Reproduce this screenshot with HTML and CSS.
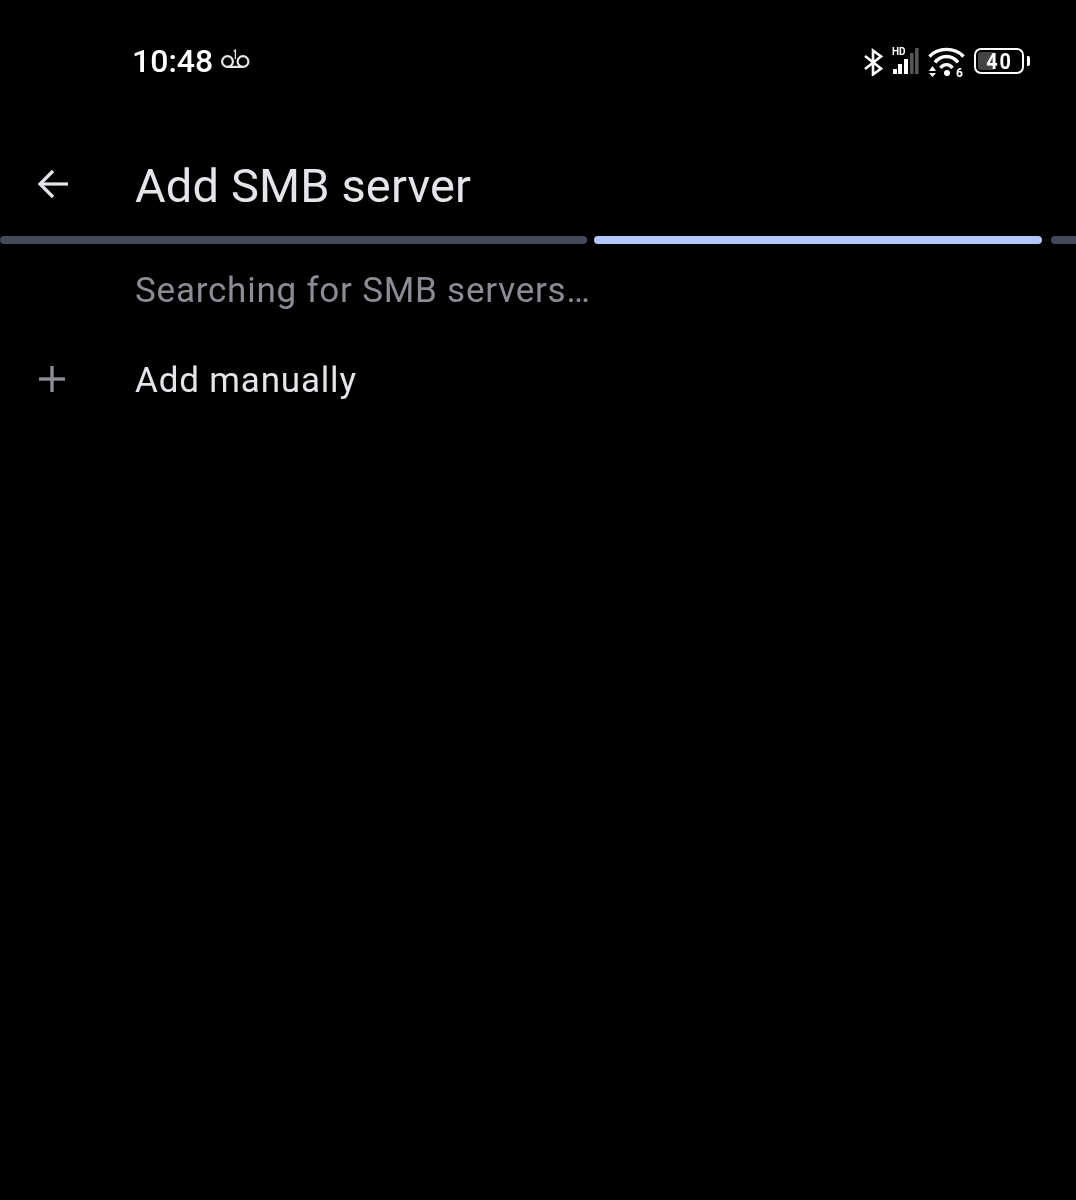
FILE: index.html
```html
<!DOCTYPE html>
<html lang="en">
<head>
    <meta charset="UTF-8">
    <meta name="viewport" content="width=device-width, initial-scale=1.0">
    <title>Add SMB server</title>
    <link rel="stylesheet" href="styles.css">
</head>
<body>
    <div class="status-bar">
        <div class="status-left">
            <span class="clock">10:48</span>
            <svg class="voicemail" width="30" height="24" viewBox="0 0 30 24" fill="none" stroke="#e6e6e6" stroke-width="2.2">
                <circle cx="7.5" cy="12.5" r="5.4"/>
                <circle cx="23" cy="12.5" r="5.4"/>
                <path d="M7.5 17.9H23"/>
                <path d="M13.8 2.4L15.4 1V10" stroke-width="1.3"/>
            </svg>
        </div>
        <div class="status-right">
            <svg class="bluetooth" width="20" height="30" viewBox="0 0 20 30" fill="none" stroke="#fff" stroke-width="2.6">
                <path d="M2 10L18 22.5L10 28.5V4.5L18 10.5L2 23"/>
            </svg>
            <div class="signal">
                <span class="hd">HD</span>
                <svg width="27" height="28" viewBox="0 0 27 28" fill="#fff">
                    <rect x="1" y="22" width="4" height="5"/>
                    <rect x="6" y="17" width="4" height="10"/>
                    <rect x="12" y="12" width="4" height="15"/>
                    <rect x="18" y="6" width="3.6" height="21" fill="#555"/>
                    <rect x="23" y="1" width="3.6" height="26" fill="#555"/>
                </svg>
            </div>
            <div class="wifi">
                <svg width="37" height="32" viewBox="0 0 37 32" fill="none" stroke="#fff" stroke-width="3.4">
                    <path d="M1.5 11.5C10 2 27 2 35.5 11.5"/>
                    <path d="M7 17.5C13 9.5 24 9.5 30 17.5"/>
                    <path d="M12.5 23C15.5 18.5 21.5 18.5 24.5 23"/>
                    <circle cx="19" cy="28" r="3" fill="#fff" stroke="none"/>
                    <path d="M4.5 21L8 26H1Z" fill="#fff" stroke="none"/>
                    <path d="M1 28H8L4.5 32Z" fill="#fff" stroke="none"/>
                </svg>
                <span class="wifi-six">6</span>
            </div>
            <div class="battery">
                <div class="battery-body">
                    <div class="battery-level" style="width: 40%"></div>
                    <span class="battery-text">40</span>
                </div>
                <div class="battery-tip"></div>
            </div>
        </div>
    </div>

    <div class="toolbar">
        <div class="icon-col">
            <svg width="36" height="36" viewBox="0 0 36 36" fill="none" stroke="#e6e6ea" stroke-width="3.2">
                <path d="M33 17H5"/>
                <path d="M18 4L5 17L18 30"/>
            </svg>
        </div>
        <h1 class="title">Add SMB server</h1>
    </div>

    <div class="progress">
        <div class="progress-track progress-first"></div>
        <div class="progress-bar"></div>
        <div class="progress-track progress-last"></div>
    </div>

    <p class="searching">Searching for SMB servers…</p>

    <div class="list-item">
        <div class="icon-col">
            <svg width="28" height="28" viewBox="0 0 28 28" fill="none" stroke="#8c8c96" stroke-width="3.4">
                <path d="M14 1V27"/>
                <path d="M1 14H27"/>
            </svg>
        </div>
        <span class="list-label">Add manually</span>
    </div>
</body>
</html>
```

FILE: styles.css
```css
body {
    margin: 0;
    height: 1200px;
    overflow: hidden;
    background-color: #000;
    font-family: Roboto, sans-serif;
    will-change: opacity;
}

.status-bar {
    height: 122px;
    box-sizing: border-box;
    padding: 42px 46px 0 132px;
    display: flex;
    justify-content: space-between;
    align-items: flex-start;
}

.status-left {
    display: flex;
    align-items: center;
    gap: 7px;
}

.clock {
    color: #fff;
    font-size: 32px;
    line-height: 38px;
    font-weight: 500;
}

.status-right {
    display: flex;
    align-items: center;
    gap: 9px;
    height: 38px;
}

.signal {
    position: relative;
    width: 27px;
    height: 28px;
}

.hd {
    position: absolute;
    left: 0;
    top: 0;
    color: #fff;
    font-size: 10px;
    font-weight: 700;
    line-height: 10px;
}

.wifi {
    position: relative;
    width: 37px;
    height: 32px;
}

.wifi-six {
    position: absolute;
    right: 2px;
    bottom: -3px;
    color: #fff;
    font-size: 12px;
    font-weight: 700;
    line-height: 13px;
}

.battery {
    display: flex;
    align-items: center;
    gap: 3px;
}

.battery-body {
    position: relative;
    width: 50px;
    height: 26px;
    box-sizing: border-box;
    border: 2.5px solid #fff;
    border-radius: 7px;
    padding: 2px;
}

.battery-level {
    height: 100%;
    background-color: #444;
    border-radius: 3px;
}

.battery-text {
    position: absolute;
    left: 1px;
    right: 0;
    top: 1px;
    text-align: center;
    color: #fff;
    font-size: 22px;
    line-height: 21px;
    font-weight: 700;
    letter-spacing: 2px;
    transform: scaleX(0.9);
}

.battery-tip {
    width: 3px;
    height: 10px;
    background-color: #fff;
    border-radius: 0 2px 2px 0;
}

.toolbar {
    display: flex;
    align-items: center;
    height: 114px;
    box-sizing: border-box;
    padding-top: 12px;
}

.icon-col {
    width: 135px;
    padding-left: 35px;
    box-sizing: border-box;
    flex-shrink: 0;
    display: flex;
    align-items: center;
}

.title {
    margin: 0;
    color: #e4e4e9;
    font-size: 47px;
    font-weight: 400;
    letter-spacing: 0.15px;
}

.progress {
    display: flex;
    gap: 7px;
    height: 8px;
}

.progress-track {
    background-color: #444a5c;
    border-radius: 4px;
}

.progress-first {
    width: 587px;
}

.progress-bar {
    width: 448px;
    background-color: #b3c7fb;
    border-radius: 4px;
}

.progress-last {
    flex: 1;
    margin-left: 2px;
    border-radius: 4px 0 0 4px;
}

.searching {
    margin: 25px 0 0 135px;
    color: #8c8c96;
    font-size: 35px;
    line-height: 44px;
    letter-spacing: 0.77px;
}

.list-item {
    display: flex;
    align-items: center;
    height: 46px;
    margin-top: 43px;
}

.list-item .icon-col {
    padding-left: 38px;
}

.list-label {
    padding-top: 2px;
    color: #e4e4e9;
    font-size: 35px;
    letter-spacing: 0.82px;
}
```
